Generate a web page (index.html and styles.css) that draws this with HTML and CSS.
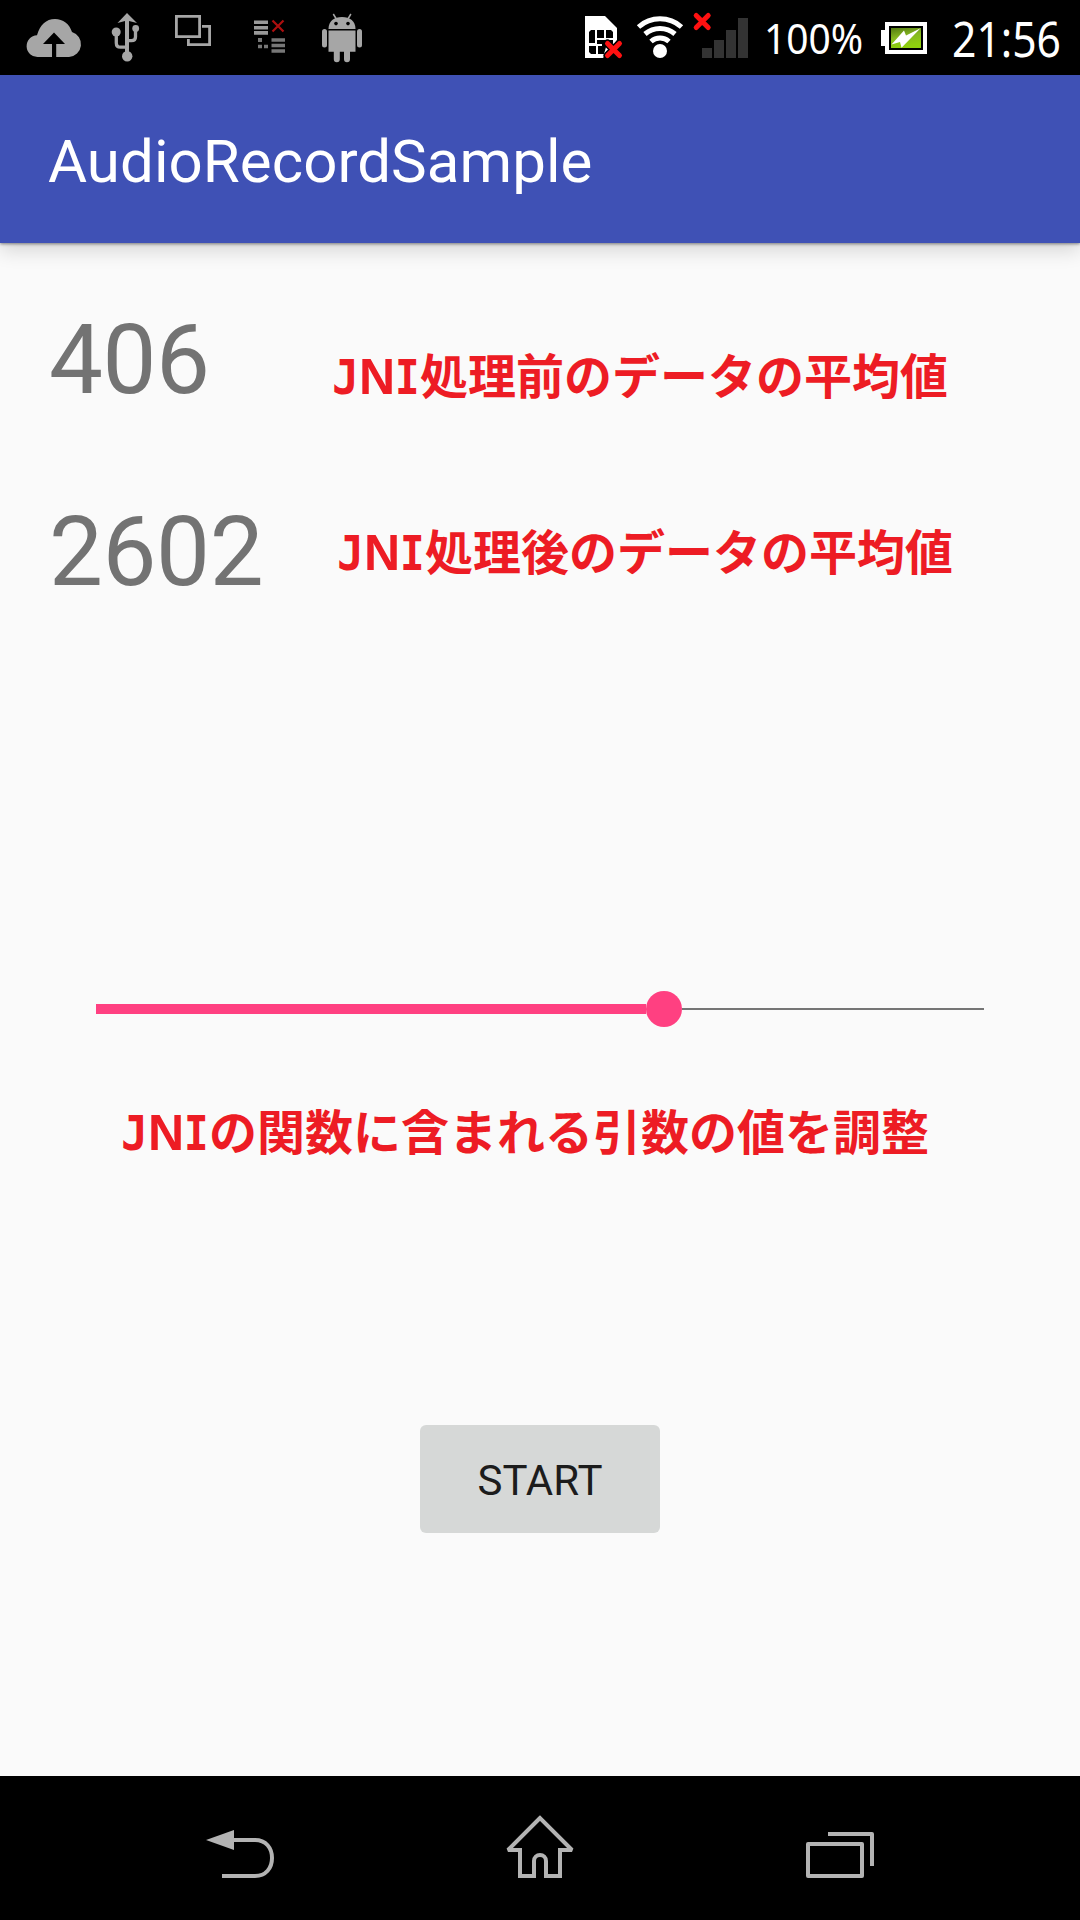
FILE: index.html
```html
<!DOCTYPE html>
<html lang="ja">
<head>
<meta charset="utf-8">
<title>AudioRecordSample</title>
<link rel="stylesheet" href="styles.css">
</head>
<body>
<div class="screen">
  <header class="status">
    <div class="status-group">
      <svg class="cloud" width="100" height="75" viewBox="0 0 100 75" fill="#a6a6a6">
        <path d="M38 57A10.900 10.900 0 0 1 37 35.200C40 25 46 19 55 19C63 19 69.500 24 72 32A12.800 12.800 0 0 1 69 57Z"/>
        <path d="M54 32.500L65 44H56.200V57H52V44H43Z" fill="#000"/>
      </svg>
      <svg width="60" height="75" viewBox="100 0 60 75" fill="#a6a6a6">
        <path d="M127 13L137 23L129 21V52H125V21L117.500 23Z"/>
        <circle cx="127.200" cy="56.200" r="5.200"/><circle cx="116.200" cy="32" r="4.500"/><circle cx="135.700" cy="28.500" r="3.400"/>
        <path d="M116.300 33V43Q116.300 47.200 120.500 47.200H127M135.500 29V37Q135.500 40.700 131.500 40.700H127" fill="none" stroke="#a6a6a6" stroke-width="3.300"/>
      </svg>
      <svg width="80" height="75" viewBox="160 0 80 75" fill="none" stroke="#a6a6a6" stroke-width="2.800">
        <path d="M176.400 16.400H199.600V36.600H176.400ZM202 26.400H209.600V44.600H188.400V39"/>
      </svg>
      <svg width="70" height="75" viewBox="240 0 70 75">
        <path d="M254 20.500h14v3.500h-14zM254 26h14v3.500h-14zM254 31h14v3.700h-14z" fill="#999"/>
        <path d="M258 38h4v4h-4zM258 44.700h4v3.500h-4zM264 44.700h4v3.500h-4zM271.500 38.300h13.500v3.500h-13.500zM271.500 43.800h13.500v3.500h-13.500zM271.500 49.200h13.500v3.600h-13.500z" fill="#777"/>
        <path d="M272.500 20.500l11 11M283.500 20.500l-11 11" stroke="#ad0f0f" stroke-width="2.200"/>
      </svg>
      <svg width="70" height="75" viewBox="310 0 70 75" fill="#a6a6a6">
        <path d="M328.500 29C328.500 21 334 17 342 17S355.500 21 355.500 29Z"/>
        <path d="M333.300 14l3 5M350.900 14l-3 5" stroke="#a6a6a6" stroke-width="1.500"/>
        <circle cx="336" cy="23.600" r="1.800" fill="#000"/><circle cx="348" cy="23.600" r="1.800" fill="#000"/>
        <path d="M328.500 30.500H355.500V51.800H350V59.200a3 3 0 0 1-6 0V51.800H339.800V59.200a3 3 0 0 1-6 0V51.800H328.500Z"/>
        <rect x="322" y="29" width="5" height="18.500" rx="2.500"/><rect x="357" y="29" width="5" height="18.500" rx="2.500"/>
      </svg>
    </div>
    <div class="status-group">
      <svg width="60" height="75" viewBox="570 0 60 75">
        <path d="M585 16H605L617 28V40L603 58H585Z" fill="#fff"/>
        <path d="M591 30H595V43H589V32ZM597 30H604V38H597ZM606 30H611L613 32V38H606ZM597 40H613V43L606 47L604 54H598V46H602V44H597ZM589 46H596V54H591L589 52Z" fill="#000"/>
        <path d="M607.500 43.500l12 12M619.500 43.500l-12 12" stroke="#000" stroke-width="8" stroke-linecap="round"/>
        <path d="M607.500 43.500l12 12M619.500 43.500l-12 12" stroke="#f11" stroke-width="5" stroke-linecap="round"/>
      </svg>
      <svg width="60" height="75" viewBox="630 0 60 75" fill="none" stroke="#fff" stroke-width="5">
        <circle cx="660" cy="51" r="7" fill="#fff" stroke="none"/>
        <path d="M638.500 27A32.500 32.500 0 0 1 681.500 27M645 34A23 23 0 0 1 675 34M651 41.500A13.500 13.500 0 0 1 669 41.500"/>
      </svg>
      <svg width="70" height="75" viewBox="690 0 70 75" fill="#333">
        <path d="M702 48h10v10h-10zM714 40h10v18h-10zM726 30h10v28h-10zM738 18h10v40h-10z"/>
        <path d="M696.200 15.500l12 12M708.200 15.500l-12 12" stroke="#f11" stroke-width="5" stroke-linecap="round"/>
      </svg>
      <span class="percent"><span class="percent-text">100%</span></span>
      <svg width="70" height="75" viewBox="870 0 70 75">
        <defs><linearGradient id="charge" x1="0" y1="0" x2="0.300" y2="1"><stop offset="0" stop-color="#547a12"/><stop offset=".5" stop-color="#86b820"/><stop offset="1" stop-color="#8fd00e"/></linearGradient></defs>
        <path d="M885 22H927V54H885V46H881V30H885Z" fill="#fff"/>
        <path d="M889 26H923V50H889Z"/>
        <path d="M891 28H921V48H891Z" fill="url(#charge)"/>
        <path d="M920.500 28.300L901.500 47.800L900 42L891.500 44.500L904 30.500L906 35.500Z" fill="#fff"/>
      </svg>
      <span class="clock"><span class="clock-text">21:56</span></span>
    </div>
  </header>

  <div class="appbar"><h1 class="title">AudioRecordSample</h1></div>

  <main class="content">
    <div class="reading reading-before">
      <span class="value">406</span>
      <span class="note"><span class="latin"><span class="cap-j">J</span>N<span class="cap-i">I</span></span>処理前のデータの平均値</span>
    </div>
    <div class="reading reading-after">
      <span class="value">2602</span>
      <span class="note"><span class="latin"><span class="cap-j">J</span>N<span class="cap-i">I</span></span>処理後のデータの平均値</span>
    </div>
    <div class="slider">
      <div class="slider-fill"></div>
      <div class="slider-thumb"></div>
      <div class="slider-rest"></div>
    </div>
    <p class="note slider-note"><span class="latin"><span class="cap-j">J</span>N<span class="cap-i">I</span></span>の関数に含まれる引数の値を調整</p>
    <button class="start" type="button">START</button>
  </main>

  <nav class="navbar">
    <svg width="80" height="80" viewBox="200 1808 80 80">
      <path d="M206 1840L234 1830V1850Z" fill="#b3b3b3"/>
      <path d="M233 1840H255C266 1840 272 1848 272 1858S266 1876 255 1876H222" fill="none" stroke="#b3b3b3" stroke-width="4"/>
    </svg>
    <svg width="80" height="80" viewBox="500 1808 80 80" fill="none" stroke="#b3b3b3" stroke-width="4">
      <path d="M540 1818L508 1850H520V1876H534V1861A6 6 0 0 1 546 1861V1876H560V1850H572Z" stroke-miterlimit="2"/>
    </svg>
    <svg width="80" height="80" viewBox="800 1808 80 80" fill="none" stroke="#b3b3b3" stroke-width="4">
      <path d="M808 1844H862V1876H808ZM828 1834H872V1866" stroke-linejoin="round"/>
    </svg>
  </nav>
</div>
</body>
</html>
```
FILE: styles.css
```css
* { box-sizing: border-box; }
body { margin: 0; background: #000; font-family: Roboto, "Noto Sans CJK JP", sans-serif; }
.screen { width: 1080px; height: 1920px; display: flex; flex-direction: column; overflow: hidden; }

.status { height: 75px; flex: none; display: flex; justify-content: space-between; background: #000; color: #fff; font-family: "Noto Sans", sans-serif; }
.status-group { display: flex; height: 75px; }
.status svg, .navbar svg { display: block; flex: none; }
.percent { width: 110px; padding-left: 4px; }
.clock { width: 140px; padding-left: 12px; }
.percent-text, .clock-text { display: block; line-height: 76px; white-space: nowrap; transform-origin: 0 50%; }
.percent-text { font-size: 41px; transform: scaleX(.95); }
.clock-text { font-size: 49px; transform: scaleX(.87); }

.appbar { height: 168px; flex: none; display: flex; align-items: center; padding: 5px 0 0 48px; background: #3f51b5; color: #fff; position: relative; box-shadow: 0 1px 3px rgba(0,0,0,.45), 0 8px 18px rgba(0,0,0,.14); }
.title { margin: 0; font-size: 60px; font-weight: 400; line-height: 72px; letter-spacing: .05px; }

.content { flex: 1; display: flex; flex-direction: column; background: #fafafa; padding: 61px 96px 0 49px; }
.reading { display: flex; height: 112px; }
.reading-after { margin-top: 80px; }
.value { width: 284px; flex: none; font-size: 96px; line-height: 112px; letter-spacing: -.4px; color: #737373; }
.reading-after .value { width: 289px; }
.note { margin: 0; color: #ed1c24; font: 700 48px/72px "Noto Sans CJK JP", sans-serif; white-space: nowrap; }
.reading-before .note { padding-top: 33px; }
.reading-after .note { padding-top: 17px; }
.latin { font-family: "Liberation Sans", sans-serif; font-size: 50px; line-height: 1; }
.cap-j, .cap-i { display: inline-block; font-family: "DejaVu Sans Mono", monospace; font-size: 48px; transform-origin: 0 50%; }
.cap-j { width: 27px; margin-left: -1px; transform: scaleX(.93); }
.cap-i { width: 25px; transform: scaleX(.85); }

.slider { display: flex; align-items: center; height: 36px; width: 888px; margin: 383px 0 0 47px; }
.slider-fill { width: 550px; height: 10px; background: #ff4081; }
.slider-thumb { width: 36px; height: 36px; border-radius: 50%; background: #ff4081; }
.slider-rest { flex: 1; height: 2px; background: #757575; }
.slider-note { height: 72px; margin: 66px 0 0 73px; }

.start { align-self: center; width: 240px; height: 108px; margin: 260px 0 0 47px; border: 0; border-radius: 6px; background: #d6d8d7; color: #1c1c1c; font: 400 42px/50px Roboto, sans-serif; padding: 4px 0 0; }

.navbar { height: 144px; flex: none; display: grid; grid-template-columns: repeat(3, 300px); justify-content: center; place-items: center; background: #000; }
```
